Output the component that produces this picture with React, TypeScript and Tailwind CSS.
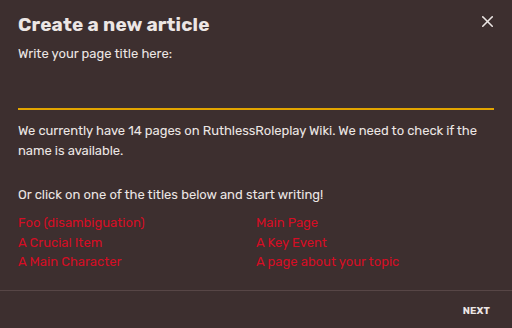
import { X } from "lucide-react";

const LINKS = [
  "Foo (disambiguation)",
  "Main Page",
  "A Crucial Item",
  "A Key Event",
  "A Main Character",
  "A page about your topic",
];

export default function App() {
  return (
    <div
      className="w-[512px] h-[328px] bg-[#3d2f2f] text-[#ece6e4] flex flex-col overflow-hidden"
      style={{ fontFamily: "Rubik, Roboto, 'Noto Sans', sans-serif" }}
    >
      <div className="px-[18px] pt-[12px] flex-1">
        <div className="flex items-start justify-between">
          <h2 className="text-[19px] leading-[26px] font-bold tracking-[0.15px]">Create a new article</h2>
          <button className="text-[#ece6e4] mt-0 -mr-[3px]">
            <X className="w-[19px] h-[19px]" strokeWidth={2} />
          </button>
        </div>

        <div className="mt-[7px] text-[13px] leading-[18px]">Write your page title here:</div>
        <div className="mt-[45px] h-[2px] border-b-2 border-[#e2a400]" />

        <p className="mt-[11px] text-[13px] leading-[20px] tracking-[-0.05px]">
          We currently have 14 pages on RuthlessRoleplay Wiki. We need to check if the name is available.
        </p>
        <p className="mt-[24px] text-[13px] leading-[20px]">
          Or click on one of the titles below and start writing!
        </p>

        <div className="mt-[8px] grid grid-cols-2 text-[13px] leading-[19.5px] text-[#d60d24]">
          {LINKS.map((l) => (
            <a key={l} href="#" className="hover:underline">
              {l}
            </a>
          ))}
        </div>
      </div>

      <div className="border-t border-[#574646] h-[38px] flex items-center justify-end px-[22px] pt-[3px]">
        <button className="text-[10px] font-bold uppercase tracking-[0.1px] text-[#ece6e4]">Next</button>
      </div>
    </div>
  );
}
